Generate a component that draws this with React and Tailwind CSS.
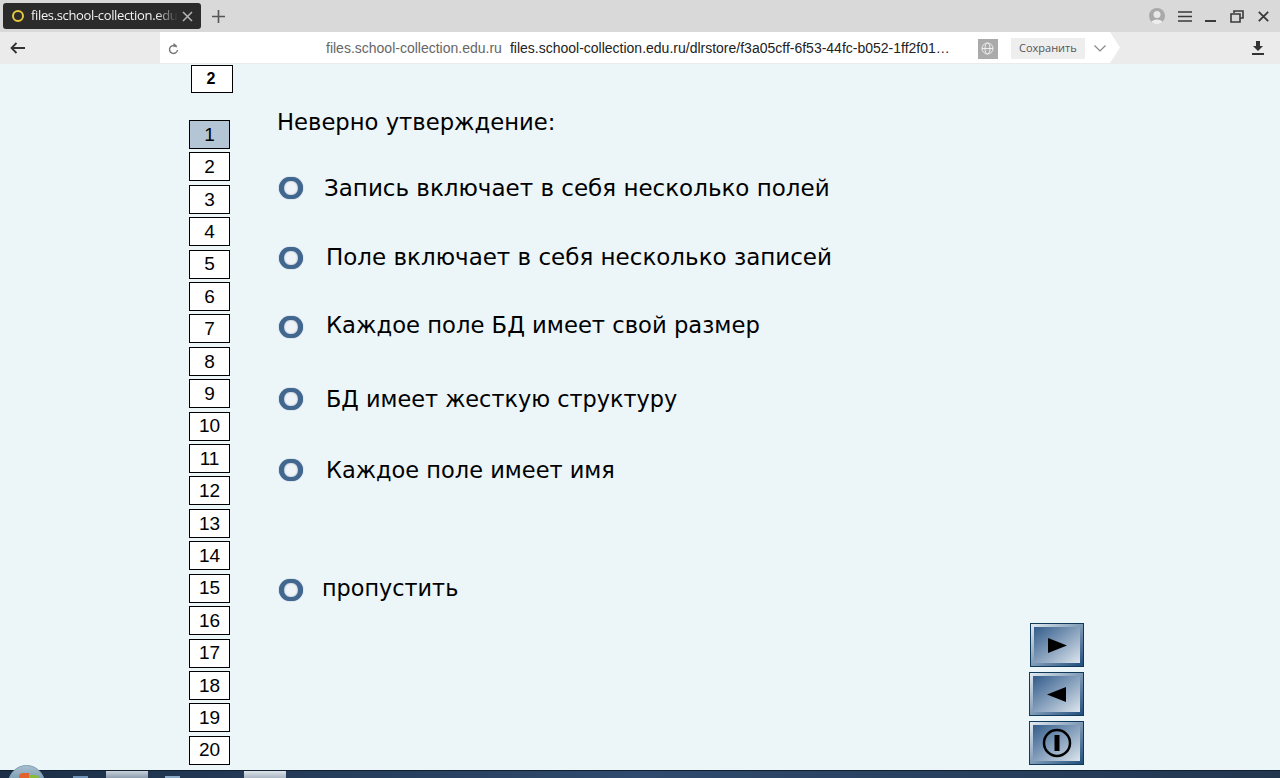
const numbers = ['1', '2', '3', '4', '5', '6', '7', '8', '9', '10', '11', '12', '13', '14', '15', '16', '17', '18', '19', '20'];

const answers = [
  { text: 'Запись включает в себя несколько полей', top: 'mt-[36px]', gap: 'ml-[21px]', shift: 'text-[23px]' },
  { text: 'Поле включает в себя несколько записей', top: 'mt-[40px]', gap: 'ml-[23px]', shift: 'text-[23px] -translate-y-px' },
  { text: 'Каждое поле БД имеет свой размер', top: 'mt-[39px]', gap: 'ml-[23px]', shift: 'text-[22.700px] -translate-y-0.5' },
  { text: 'БД имеет жесткую структуру', top: 'mt-[42px]', gap: 'ml-[23px]', shift: 'text-[22.400px]' },
  { text: 'Каждое поле имеет имя', top: 'mt-[41px]', gap: 'ml-[23px]', shift: 'text-[22.500px]' },
  { text: 'пропустить', top: 'mt-[90px]', gap: 'ml-[19px]', shift: 'text-[22.350px] -translate-y-0.5' },
];

function Radio() {
  return <span className="w-[24px] h-[22px] shrink-0 rounded-full border-x-[5px] border-y-[4px] border-[#41678f] bg-[#eef3f7] shadow-[inset_0_0_2px_#8fa8c0,0_0_1px_#41678f]" />;
}

function NavButton({ children, size = 'ml-px w-[54px]' }) {
  return (
    <button className={`${size} h-[44px] flex items-center justify-center border border-[#0f3a5c] p-[3px] bg-gradient-to-br from-[#e4ebf1] to-[#1f4f7c]`}>
      <span className="w-full h-full flex items-center justify-center bg-gradient-to-br from-[#335d8b] to-[#dde5ec]">{children}</span>
    </button>
  );
}

function TitleBar() {
  return (
    <div className="h-[32px] bg-[#d9d9d9] flex items-center pl-[3px] pr-[11px] font-['Open_Sans',sans-serif]">
      <div className="w-[198px] h-[26px] rounded-[3px] bg-[#2b2b2b] flex items-center pl-[9px] pr-[8px]">
        <span className="w-[12px] h-[12px] rounded-full border-2 border-[#e8c93c] shrink-0" />
        <span className="ml-[7px] w-[147px] overflow-hidden whitespace-nowrap text-[13px] tracking-[-0.35px] text-[#f2f2f2] [mask-image:linear-gradient(to_right,black_85%,transparent)]">files.school-collection.edu.ru</span>
        <svg className="ml-auto" width="11" height="11" viewBox="0 0 11 11"><path d="M1 1l9 9M10 1l-9 9" stroke="#b5b5b5" strokeWidth="1.5" /></svg>
      </div>
      <svg className="ml-[11px]" width="13" height="13" viewBox="0 0 13 13"><path d="M6.500 0v13M0 6.500h13" stroke="#555" strokeWidth="1.600" /></svg>
      <div className="ml-auto flex items-center">
        <svg width="16" height="16" viewBox="0 0 16 16"><circle cx="8" cy="8" r="8" fill="#a9a9a9" /><circle cx="8" cy="6.500" r="3.500" fill="#e8e8e8" /><path d="M2.500 14c1-3.500 10-3.500 11 0a8 8 0 0 1-11 0z" fill="#ededed" /></svg>
        <svg className="ml-[13px]" width="14" height="11" viewBox="0 0 14 11"><path d="M0 1h14M0 5.500h14M0 10h14" stroke="#3a3a3a" strokeWidth="1.700" /></svg>
        <svg className="ml-[13px]" width="11" height="11" viewBox="0 0 11 11"><path d="M0 10h11" stroke="#3a3a3a" strokeWidth="2" /></svg>
        <svg className="ml-[14px]" width="14" height="13" viewBox="0 0 14 13"><path d="M4 3V1h9v7h-3M1 4h9v8H1z" fill="none" stroke="#3a3a3a" strokeWidth="1.600" /></svg>
        <svg className="ml-[14px]" width="11" height="11" viewBox="0 0 11 11"><path d="M.8.800l9.400 9.400M10.200.800l-9.400 9.400" stroke="#3a3a3a" strokeWidth="1.800" /></svg>
      </div>
    </div>
  );
}

function AddressBar() {
  return (
    <div className="h-[32px] bg-[#ebebeb] flex items-center font-['Liberation_Sans',sans-serif]">
      <div className="w-[160px] shrink-0 pl-[10px]">
        <svg width="15" height="12" viewBox="0 0 15 12"><path d="M15 6H2M6.500 1L1.500 6l5 5" fill="none" stroke="#333" strokeWidth="1.800" /></svg>
      </div>
      <div className="w-[960px] h-[31px] self-start pt-[2px] bg-white flex items-center pl-[8px] text-[14px] [clip-path:polygon(0_0,950px_0,960px_50%,950px_100%,0_100%)]">
        <svg width="11" height="12" viewBox="0 0 11 12"><path d="M8.800 4.200A4 4 0 1 0 9.500 7" fill="none" stroke="#777" strokeWidth="1.400" /><path d="M5.500 0v4l3.500-1.500z" fill="#777" /></svg>
        <span className="ml-[147px] text-[#666] whitespace-nowrap">files.school-collection.edu.ru</span>
        <span className="ml-[8px] w-[440px] text-[#222] whitespace-nowrap">files.school-collection.edu.ru/dlrstore/f3a05cff-6f53-44fc-b052-1ff2f01…</span>
        <span className="ml-[28px] w-[20px] h-[20px] bg-[#aaaaaa] flex items-center justify-center">
          <svg width="13" height="13" viewBox="0 0 13 13"><g fill="none" stroke="#eee" strokeWidth="1"><circle cx="6.500" cy="6.500" r="5.500" /><ellipse cx="6.500" cy="6.500" rx="2.500" ry="5.500" /><path d="M1 6.500h11" /></g></svg>
        </span>
        <span className="ml-[13px] w-[74px] h-[21px] bg-[#eeeeee] text-[#555] text-[11px] flex items-center justify-center font-['Open_Sans',sans-serif]">Сохранить</span>
        <svg className="ml-[9px]" width="12" height="7" viewBox="0 0 12 7"><path d="M.5.500L6 6 11.500.500" fill="none" stroke="#888" strokeWidth="1.200" /></svg>
      </div>
      <svg className="ml-auto mr-[15px]" width="14" height="14" viewBox="0 0 14 14"><path d="M5 0h4v5h3L7 10 2 5h3z" fill="#333" /><path d="M1 13h12" stroke="#333" strokeWidth="2" /></svg>
    </div>
  );
}

function Taskbar() {
  return (
    <div className="relative h-[8px] bg-gradient-to-r from-[#1c2f47] via-[#2f4a6e] to-[#22364f] border-t border-[#10202f] flex">
      <span className="absolute left-[8px] -top-[6px] w-[37px] h-[37px] rounded-full bg-gradient-to-b from-[#a9bfce] to-[#2f6a8a] border border-[#7f9db3] overflow-hidden">
        <span className="absolute left-[10px] top-[7px] w-[10px] h-[10px] rounded-tl-[4px] bg-[#e2622e]" />
        <span className="absolute left-[20px] top-[9px] w-[10px] h-[10px] rounded-tr-[4px] bg-[#8abb3b]" />
      </span>
      <span className="ml-[73px] mt-[5px] w-[15px] h-[2px] bg-[#6f93b8]" />
      <span className="ml-[18px] w-[42px] h-full bg-gradient-to-b from-[#c9d2dc] to-[#8b9bad]" />
      <span className="ml-[17px] mt-[5px] w-[15px] h-[2px] bg-[#8cabc9]" />
      <span className="ml-[64px] w-[42px] h-full bg-gradient-to-b from-[#dde3ea] to-[#a9b5c2]" />
    </div>
  );
}

export default function App() {
  return (
    <div className="w-[1280px] h-[778px] overflow-hidden flex flex-col bg-[#ecf5f8]">
      <TitleBar />
      <AddressBar />

      <main className="h-[706px] flex font-['Liberation_Sans',sans-serif] text-black">
        {/* question numbers */}
        <div className="ml-[189px] w-[44px] shrink-0 flex flex-col">
          <div className="ml-[2px] mt-px w-[42px] h-[28px] border border-black bg-white flex items-center justify-center pr-[2px] text-base font-bold">2</div>
          <div className="mt-[27px] flex flex-col gap-[3.420px]">
            {numbers.map(n => (
              <div key={n} className={`w-[41px] h-[29px] pt-px border border-black flex items-center justify-center text-[19px] ${n === '1' ? 'bg-[#b4c6d6]' : 'bg-white'}`}>{n}</div>
            ))}
          </div>
        </div>

        {/* question */}
        <div className="ml-[44px] w-[700px] font-['DejaVu_Sans',sans-serif] leading-[30px] text-black">
          <p className="mt-[43px] text-[22.700px]">Неверно утверждение:</p>
          <div className="flex flex-col">
            {answers.map(a => (
              <div key={a.text} className={`${a.top} h-[30px] flex items-center pl-[2px]`}>
                <Radio />
                <span className={`${a.gap} ${a.shift} whitespace-nowrap`}>{a.text}</span>
              </div>
            ))}
          </div>
        </div>

        {/* navigation */}
        <div className="ml-[52px] mt-[559px] flex flex-col gap-[5px] text-black">
          <NavButton>
            <svg width="19" height="15" viewBox="0 0 19 15"><path d="M0 0l19 7.500L0 15z" fill="#000" /></svg>
          </NavButton>
          <NavButton size="w-[55px]">
            <svg width="19" height="15" viewBox="0 0 19 15"><path d="M19 0L0 7.500 19 15z" fill="#000" /></svg>
          </NavButton>
          <NavButton size="w-[55px]">
            <svg width="30" height="30" viewBox="0 0 30 30"><circle cx="15" cy="15" r="13" fill="none" stroke="#000" strokeWidth="2.500" /><path d="M12.500 7h5v16h-5z" fill="#000" /></svg>
          </NavButton>
        </div>
      </main>

      <Taskbar />
    </div>
  );
}
